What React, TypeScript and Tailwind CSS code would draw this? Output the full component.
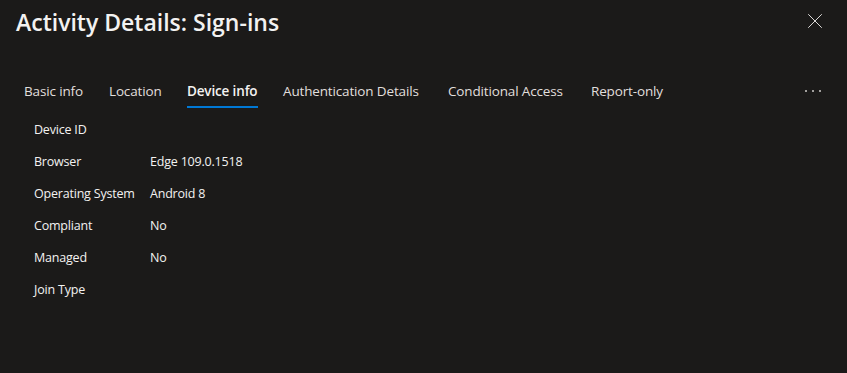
import { X } from "lucide-react";

const tabs = [
  { label: "Basic info", w: "w-[85px]" },
  { label: "Location", w: "w-[78px]" },
  { label: "Device info", w: "w-[96px]" },
  { label: "Authentication Details", w: "w-[165px]" },
  { label: "Conditional Access", w: "w-[143px]" },
  { label: "Report-only", w: "w-[100px]" },
];

const rows = [
  { label: "Device ID", value: "" },
  { label: "Browser", value: "Edge 109.0.1518" },
  { label: "Operating System", value: "Android 8" },
  { label: "Compliant", value: "No" },
  { label: "Managed", value: "No" },
  { label: "Join Type", value: "" },
];

export default function App() {
  return (
    <div className="w-[847px] h-[373px] bg-[#1b1a19] text-[#f3f2f1] font-['Open_Sans',sans-serif] overflow-hidden">
      <div className="flex items-start justify-between pl-4 pr-[19px] pt-[6px]">
        <h1 className="text-[23px] font-semibold tracking-[0px] leading-8">
          Activity Details: Sign-ins
        </h1>
        <button className="mt-[2px] text-[#e1dfdd]">
          <X size={26} strokeWidth={0.9} />
        </button>
      </div>

      <div className="flex items-center pl-6 pr-[26px] mt-[37px] h-[32px]">
        {tabs.map((t) => (
          <div key={t.label} className={`${t.w} shrink-0 relative h-full flex items-center`}>
            <span
              className={`text-[13.5px] tracking-[-0.15px] whitespace-nowrap ${
                t.label === "Device info" ? "font-semibold" : "text-[#e1dfdd]"
              }`}
            >
              {t.label}
            </span>
            {t.label === "Device info" && (
              <div className="absolute left-0 bottom-[-1px] h-[2px] w-[71px] bg-[#0078d4]" />
            )}
          </div>
        ))}
        <div className="ml-auto flex gap-[5px]">
          <span className="w-[2px] h-[2px] bg-[#a19f9d]" />
          <span className="w-[2px] h-[2px] bg-[#a19f9d]" />
          <span className="w-[2px] h-[2px] bg-[#a19f9d]" />
        </div>
      </div>

      <div className="pl-[34px] pt-[7px]">
        {rows.map((r) => (
          <div key={r.label} className="flex h-8 items-center text-[12.5px] tracking-[-0.2px]">
            <span className="w-[116px] shrink-0 whitespace-nowrap">{r.label}</span>
            <span>{r.value}</span>
          </div>
        ))}
      </div>
    </div>
  );
}
